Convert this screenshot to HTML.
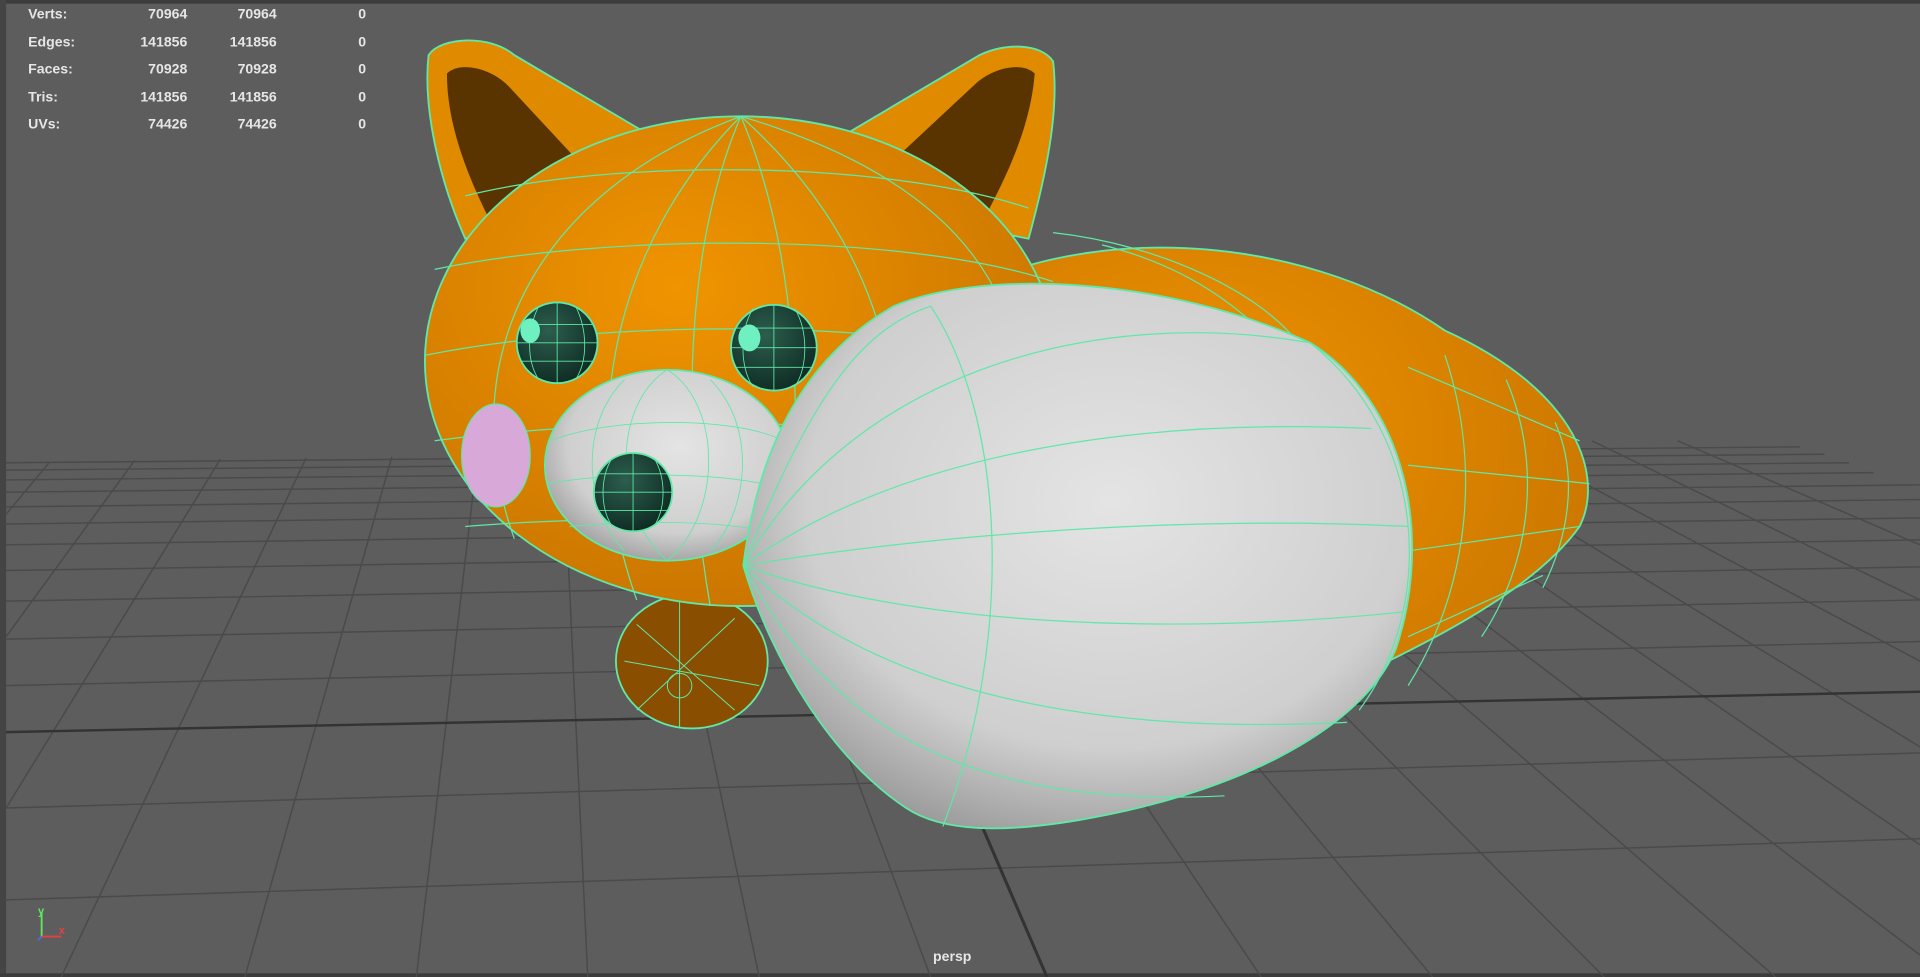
<!DOCTYPE html>
<html><head><meta charset="utf-8"><style>
html,body{margin:0;padding:0;width:1920px;height:977px;overflow:hidden;background:#5d5d5d}
svg{display:block}
text{font-family:"Liberation Sans",Arial,sans-serif;font-weight:bold;fill:#e6e6e6}
</style></head><body>
<svg width="1920" height="977" viewBox="0 0 1568 798" preserveAspectRatio="none">
<defs>
<radialGradient id="or" cx="0.4" cy="0.35" r="0.7"><stop offset="0" stop-color="#f09400"/><stop offset="1" stop-color="#c87400"/></radialGradient>
<radialGradient id="wh" cx="0.55" cy="0.4" r="0.65"><stop offset="0" stop-color="#e4e4e4"/><stop offset="0.7" stop-color="#cfcfcf"/><stop offset="1" stop-color="#9a9a9a"/></radialGradient>
<radialGradient id="ey" cx="0.4" cy="0.35" r="0.7"><stop offset="0" stop-color="#2c5e4e"/><stop offset="1" stop-color="#0e2a22"/></radialGradient>
</defs>
<rect width="1568" height="798" fill="#5d5d5d"/>
<rect width="1568" height="3" fill="#3c3c3c"/>
<rect width="5" height="798" fill="#444"/>
<rect y="795" width="1568" height="3" fill="#3c3c3c"/>
<g stroke="#4a4a4a" stroke-width="1.2" fill="none">
<path d="M5 378 L1470 365"/><path d="M5 384 L1490 371"/><path d="M5 392 L1510 378"/><path d="M5 402 L1530 386"/>
<path d="M5 414 L1568 396"/><path d="M5 428 L1568 408"/><path d="M5 445 L1568 423"/><path d="M5 466 L1568 441"/>
<path d="M5 491 L1568 463"/><path d="M5 522 L1568 490"/><path d="M5 560 L1568 524"/><path d="M5 598 L1568 565"/>
<path d="M5 660 L1568 615"/><path d="M5 735 L1568 685"/>
<path d="M40 378 L5 420"/><path d="M110 376 L5 520"/><path d="M180 375 L5 660"/><path d="M250 374 L50 798"/>
<path d="M320 373 L200 798"/><path d="M390 372 L340 798"/><path d="M460 371 L480 798"/><path d="M530 370 L620 798"/>
<path d="M600 369 L760 798"/><path d="M740 367 L1030 798"/><path d="M810 366 L1170 798"/>
<path d="M880 365 L1310 798"/><path d="M950 364 L1450 798"/><path d="M1020 363 L1568 780"/><path d="M1090 362 L1568 690"/>
<path d="M1160 361 L1568 610"/><path d="M1230 361 L1568 540"/><path d="M1300 360 L1568 490"/><path d="M1370 360 L1568 445"/>
</g>
<path d="M670 368 L855 798" stroke="#333" stroke-width="2.5"/>
<path d="M5 598 L1568 565" stroke="#333" stroke-width="2"/>
<!-- body -->
<path d="M760 250 C900 170 1080 200 1180 270 C1290 320 1310 390 1290 430 C1240 500 1100 560 900 640 L760 560 Z" fill="url(#or)" stroke="#5fe8a8" stroke-width="1.5"/>
<g stroke="#5fe8a8" stroke-width="1" fill="none">
<path d="M1180 290 C1210 380 1200 480 1150 560"/><path d="M1230 310 C1260 380 1250 460 1210 520"/><path d="M1270 345 C1290 390 1280 440 1260 480"/>
<path d="M1150 300 L1290 360"/><path d="M1150 380 L1298 395"/><path d="M1150 450 L1290 430"/><path d="M1150 520 L1260 470"/>
<path d="M860 190 C950 200 1030 240 1060 280"/><path d="M900 200 C980 220 1020 260 1040 280"/>
</g>
<!-- foot -->
<ellipse cx="565" cy="540" rx="62" ry="55" fill="#8a4e00" stroke="#5fe8a8" stroke-width="1.5"/>
<g stroke="#5fe8a8" stroke-width="0.8" fill="none"><path d="M510 540 L620 560M555 485 L555 595M520 510 L600 580M600 505 L520 580"/><circle cx="555" cy="560" r="10"/></g>
<!-- ears -->
<path d="M350 45 C360 30 400 28 420 45 L530 110 L420 180 L380 195 C360 150 345 90 350 45Z" fill="#e08a00" stroke="#5fe8a8" stroke-width="1.5"/>
<path d="M365 60 C375 50 400 55 415 70 L480 140 L400 180 C380 140 365 100 365 60Z" fill="#5a3400"/>
<path d="M860 50 C850 35 820 35 800 45 L690 110 L790 185 L840 195 C855 140 865 90 860 50Z" fill="#e08a00" stroke="#5fe8a8" stroke-width="1.5"/>
<path d="M845 60 C835 50 810 55 795 70 L720 140 L800 185 C825 140 842 100 845 60Z" fill="#5a3400"/>
<!-- head -->
<ellipse cx="605" cy="295" rx="258" ry="200" fill="url(#or)" stroke="#5fe8a8" stroke-width="1.5"/>
<g stroke="#5fe8a8" stroke-width="1" fill="none">
<path d="M605 95 C500 200 470 350 520 490"/><path d="M605 95 C560 200 555 350 580 495"/><path d="M605 95 C650 200 660 350 640 495"/>
<path d="M605 95 C700 180 760 300 720 480"/><path d="M605 95 C430 160 370 300 420 440"/><path d="M605 95 C790 150 850 250 830 370"/>
<path d="M380 160 C500 130 720 130 840 170"/><path d="M355 220 C500 190 740 190 860 230"/><path d="M348 290 C500 260 740 260 862 300"/>
<path d="M355 360 C500 340 740 340 855 370"/><path d="M380 430 C500 420 720 420 820 440"/>
</g>
<!-- cheek -->
<ellipse cx="405" cy="372" rx="28" ry="42" fill="#d8a8d8" stroke="#5fe8a8" stroke-width="1"/>
<!-- eyes -->
<g stroke="#5fe8a8" stroke-width="1.5"><circle cx="455" cy="280" r="33" fill="url(#ey)"/><circle cx="632" cy="284" r="35" fill="url(#ey)"/></g>
<g stroke="#5fe8a8" stroke-width="0.7" fill="none">
<path d="M422 280 H488M425 265 H485M425 295 H485M455 247 V313M440 250 C430 270 430 295 440 310M470 250 C480 270 480 295 470 310"/>
<path d="M597 284 H667M600 268 H664M600 300 H664M632 249 V319M615 252 C604 270 604 300 615 316M649 252 C660 270 660 300 649 316"/>
</g>
<ellipse cx="433" cy="270" rx="8" ry="10" fill="#6ef0c0"/><ellipse cx="612" cy="276" rx="9" ry="11" fill="#6ef0c0"/>
<!-- snout -->
<ellipse cx="545" cy="380" rx="100" ry="78" fill="url(#wh)" stroke="#5fe8a8" stroke-width="1.5"/>
<g stroke="#5fe8a8" stroke-width="0.7" fill="none">
<path d="M450 360 C500 340 600 340 640 360M448 395 C500 385 600 385 640 400M465 430 C520 425 590 425 630 435"/>
<path d="M545 302 C500 330 500 420 545 458M545 302 C590 330 590 420 545 458M510 310 C470 350 480 420 510 450M580 310 C620 350 610 420 580 450"/>
</g>
<circle cx="517" cy="402" r="32" fill="url(#ey)" stroke="#5fe8a8" stroke-width="1.5"/>
<g stroke="#5fe8a8" stroke-width="0.7" fill="none"><path d="M485 402 H549M488 387 H546M488 417 H546M517 370 V434M500 374 C490 390 490 415 500 430M534 374 C544 390 544 415 534 430"/></g>
<!-- tail -->
<path d="M607 462 C620 360 660 290 730 250 C800 220 950 225 1070 280 C1150 330 1170 440 1140 530 C1110 600 1000 650 880 670 C820 680 770 680 740 660 C680 620 630 540 607 462Z" fill="url(#wh)" stroke="#5fe8a8" stroke-width="1.5"/>
<g stroke="#5fe8a8" stroke-width="1" fill="none">
<path d="M1070 280 C1170 360 1170 500 1110 580"/>
<path d="M760 250 C820 340 830 520 770 675"/>
<path d="M607 462 C700 300 900 250 1070 280"/><path d="M607 462 C720 380 900 340 1120 350"/><path d="M607 462 C740 440 950 420 1150 430"/>
<path d="M607 462 C740 510 950 520 1145 500"/><path d="M607 462 C720 570 900 600 1100 590"/><path d="M607 462 C680 600 800 660 1000 650"/>
<path d="M607 462 C660 330 700 270 760 250"/>
</g>
<!-- stats -->
<g font-size="11.5">
<text x="23" y="15">Verts:</text><text x="153" y="15" text-anchor="end">70964</text><text x="226" y="15" text-anchor="end">70964</text><text x="299" y="15" text-anchor="end">0</text>
<text x="23" y="38">Edges:</text><text x="153" y="38" text-anchor="end">141856</text><text x="226" y="38" text-anchor="end">141856</text><text x="299" y="38" text-anchor="end">0</text>
<text x="23" y="60">Faces:</text><text x="153" y="60" text-anchor="end">70928</text><text x="226" y="60" text-anchor="end">70928</text><text x="299" y="60" text-anchor="end">0</text>
<text x="23" y="83">Tris:</text><text x="153" y="83" text-anchor="end">141856</text><text x="226" y="83" text-anchor="end">141856</text><text x="299" y="83" text-anchor="end">0</text>
<text x="23" y="105">UVs:</text><text x="153" y="105" text-anchor="end">74426</text><text x="226" y="105" text-anchor="end">74426</text><text x="299" y="105" text-anchor="end">0</text>
<text x="762" y="785" font-size="11.5">persp</text>
</g>
<!-- axis -->
<path d="M34 765 V745" stroke="#5fe85f" stroke-width="1.5"/><path d="M34 765 H50" stroke="#e84040" stroke-width="1.5"/><path d="M34 765 l-3 3" stroke="#4a6af0" stroke-width="1.5"/>
<text x="31" y="747" font-size="9" style="fill:#5fe85f">y</text><text x="48" y="763" font-size="9" style="fill:#e84040">x</text>
</svg>
</body></html>
